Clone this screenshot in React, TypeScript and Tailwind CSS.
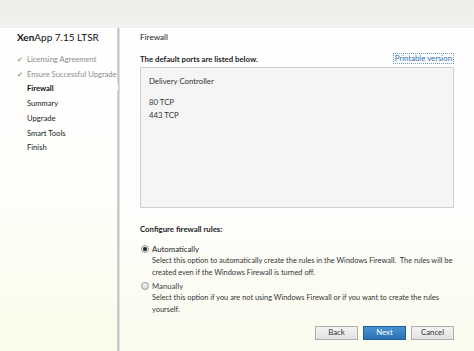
import React from "react";

const steps = [
  { label: "Licensing Agreement", state: "done" },
  { label: "Ensure Successful Upgrade", state: "done" },
  { label: "Firewall", state: "current" },
  { label: "Summary", state: "todo" },
  { label: "Upgrade", state: "todo" },
  { label: "Smart Tools", state: "todo" },
  { label: "Finish", state: "todo" },
];

function Radio({ checked }: { checked?: boolean }) {
  return (
    <span className="w-[8px] h-[8px] rounded-full border border-[#9a9a9a] bg-gradient-to-b from-[#f4f4f4] to-[#dcdcdc] flex items-center justify-center shrink-0">
      {checked && <span className="w-[4px] h-[4px] rounded-full bg-[#222]" />}
    </span>
  );
}

export default function App() {
  return (
    <div
      className="w-[474px] h-[351px] overflow-hidden flex flex-col bg-gradient-to-b from-[#edf0ea] via-[#fbfbf9] to-[#fbfbec] text-[#222]"
      style={{ fontFamily: "Lato, 'Noto Sans', sans-serif" }}
    >
      <div className="h-[28px] shrink-0" />
      <div className="flex flex-1">
        {/* sidebar */}
        <div className="w-[117px] shrink-0 relative bg-gradient-to-b from-[#ffffff] via-[#fefefb] to-[#fbfbe9] pl-[17px] pt-[2px]">
          <div className="text-[10px] leading-[14px] text-[#111] whitespace-nowrap">
            <span className="font-bold">Xen</span>App 7.15 LTSR
          </div>
          <div className="mt-[8px] flex flex-col">
            {steps.map((s) => (
              <div key={s.label} className="h-[14.8px] flex items-center text-[7.6px] whitespace-nowrap">
                <span className="w-[10px] text-[7px] text-[#9a9a9a]">{s.state === "done" ? "✔" : ""}</span>
                <span
                  className={
                    s.state === "done"
                      ? "text-[#8a8a8a]"
                      : s.state === "current"
                      ? "font-bold text-[#111]"
                      : "text-[#222]"
                  }
                >
                  {s.label}
                </span>
              </div>
            ))}
          </div>
          {/* current step notch */}
          <span className="absolute right-[-1px] top-[55px] w-0 h-0 border-y-[4px] border-y-transparent border-r-[4px] border-r-white" />
        </div>
        {/* divider shadow */}
        <div className="w-[3px] shrink-0 bg-gradient-to-r from-[#d8d8d8] via-[#c4c4c4] to-[#eeeeee]" />
        {/* main */}
        <div className="flex-1 bg-gradient-to-b from-[#ffffff] via-[#fefefe] to-[#fbfbee] pl-[20px] pr-[20px] pt-[2px] text-[7.8px]">
          <div className="text-[8.2px] leading-[14px] text-[#222]">Firewall</div>
          <div className="mt-[9px] flex items-end justify-between">
            <span className="font-bold text-[7.8px] leading-[10px]">The default ports are listed below.</span>
            <span className="text-[#2b6cb5] leading-[9px] border border-dotted border-[#6f9ad0] px-[1px]">
              Printable version
            </span>
          </div>
          <div className="mt-[3px] h-[141px] border border-[#cfcfcf] bg-[#f5f5f5] px-[8px] pt-[7px] text-[#333]">
            <div className="leading-[12px]">Delivery Controller</div>
            <div className="mt-[9px] leading-[12.5px]">80 TCP</div>
            <div className="leading-[12.5px]">443 TCP</div>
          </div>
          <div className="mt-[15px] font-bold leading-[12px]">Configure firewall rules:</div>
          <div className="mt-[8px] flex flex-col gap-[1px]">
            <div className="pl-[1px]">
              <div className="flex items-center gap-[3px] leading-[12px]">
                <Radio checked />
                <span>Automatically</span>
              </div>
              <div className="pl-[11px] leading-[12px] text-[7.4px] text-[#333]">
                Select this option to automatically create the rules in the Windows Firewall.&nbsp; The rules will be created even if the Windows Firewall is turned off.
              </div>
            </div>
            <div className="pl-[1px]">
              <div className="flex items-center gap-[3px] leading-[12px] text-[#444]">
                <Radio />
                <span>Manually</span>
              </div>
              <div className="pl-[11px] pr-[8px] leading-[12px] text-[7.4px] text-[#333]">
                Select this option if you are not using Windows Firewall or if you want to create the rules yourself.
              </div>
            </div>
          </div>
          <div className="mt-[10px] flex justify-end gap-[5px] text-[7.8px]">
            <button className="w-[43px] h-[14px] border border-[#acacac] bg-gradient-to-b from-[#f4f4f4] to-[#e2e2e2] text-[#333] leading-none">
              Back
            </button>
            <button className="w-[43px] h-[14px] border border-[#1f5f97] bg-gradient-to-b from-[#4a92cf] to-[#2a72b3] text-white leading-none">
              Next
            </button>
            <button className="w-[43px] h-[14px] border border-[#acacac] bg-gradient-to-b from-[#f4f4f4] to-[#e2e2e2] text-[#333] leading-none">
              Cancel
            </button>
          </div>
        </div>
      </div>
    </div>
  );
}
